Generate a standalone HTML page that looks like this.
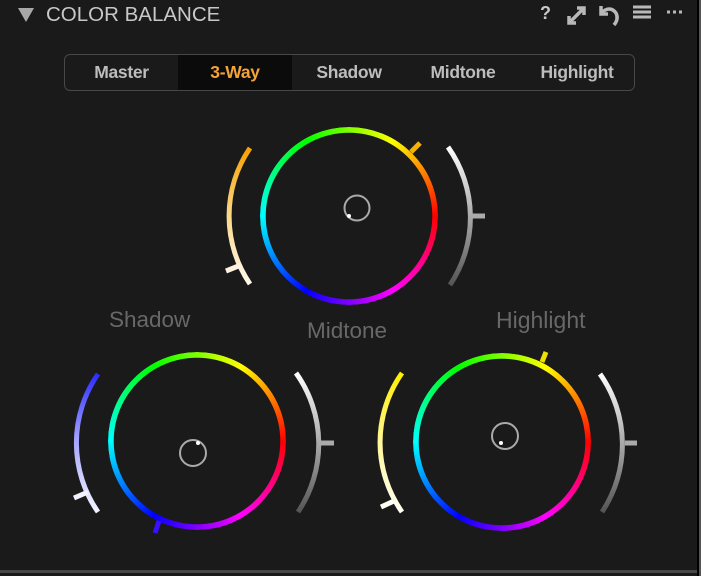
<!DOCTYPE html>
<html><head><meta charset="utf-8"><style>
body{margin:0;width:701px;height:576px;background:#1a1a1a;position:relative;overflow:hidden;font-family:"Liberation Sans",sans-serif}
.abs{position:absolute}
.ring{position:absolute;border-radius:50%;background:conic-gradient(from 90deg,#f00,#f0f 60deg,#00f 120deg,#0ff 180deg,#0f0 240deg,#ff0 300deg,#f00 360deg);-webkit-mask:radial-gradient(circle,transparent 83px,#000 83.5px,#000 89px,transparent 89.5px);mask:radial-gradient(circle,transparent 83px,#000 83.5px,#000 89px,transparent 89.5px)}
.tabs{left:64px;top:54px;width:569px;height:35px;border:1px solid #474747;border-radius:6px}
.tab{position:absolute;top:0;height:35px;line-height:35px;text-align:center;font-weight:bold;font-size:17.5px;color:#bdbdbd;letter-spacing:-0.3px}
.lbl{position:absolute;font-size:22.5px;color:#686868}
</style></head><body>
<div class="abs" style="left:18px;top:8px;width:0;height:0;border-left:8px solid transparent;border-right:8px solid transparent;border-top:14px solid #a8a8a8"></div>
<div class="abs" style="left:46px;top:3px;font-size:20.5px;color:#c8c8c8">COLOR BALANCE</div>
<div class="abs" style="left:540px;top:3px;font-size:18px;font-weight:bold;color:#c8c8c8">?</div>
<svg class="abs" style="left:0;top:0" width="701" height="576">
 <path d="M570 22 L583 9 M577 8 L584 8 L584 15 M569 16 L569 23 L576 23" stroke="#b8b8b8" stroke-width="3.5" fill="none"/>
 <path d="M601 6 L601 14 L608 14 M601 13 Q610 5 616 13 Q619 19 614 25" stroke="#b8b8b8" stroke-width="3.5" fill="none"/>
 <path d="M633 7 H651 M633 12 H651 M633 17 H651" stroke="#b8b8b8" stroke-width="3"/>
 <path d="M667 12 H670 M673 12 H676 M679 12 H682" stroke="#b8b8b8" stroke-width="3"/>
 <rect x="697" y="0" width="2" height="576" fill="#000"/>
 <rect x="699" y="0" width="2" height="576" fill="#555"/>
 <rect x="0" y="570" width="697" height="3" fill="#484848"/>
</svg>
<div class="abs tabs">
 <div class="tab" style="left:0;width:113px">Master</div>
 <div class="tab" style="left:113px;width:114px;background:#0b0b0b;color:#f2a33a">3-Way</div>
 <div class="tab" style="left:227px;width:114px">Shadow</div>
 <div class="tab" style="left:341px;width:114px">Midtone</div>
 <div class="tab" style="left:455px;width:114px">Highlight</div>
</div>
<div class="lbl" style="left:109px;top:307px">Shadow</div>
<div class="lbl" style="left:307px;top:318px">Midtone</div>
<div class="lbl" style="left:496px;top:307px;font-size:23px">Highlight</div>
<div class="ring" style="left:260px;top:127px;width:178px;height:178px"></div>
<div class="ring" style="left:108px;top:352px;width:178px;height:178px"></div>
<div class="ring" style="left:413px;top:353px;width:178px;height:178px"></div>
<svg class="abs" style="left:0;top:0" width="701" height="576">
 <defs>
  <linearGradient id="gA" gradientUnits="userSpaceOnUse" x1="0" y1="147" x2="0" y2="285"><stop offset="0" stop-color="#f5a000"/><stop offset="0.5" stop-color="#fbd98a"/><stop offset="1" stop-color="#fff8ec"/></linearGradient>
  <linearGradient id="gB" gradientUnits="userSpaceOnUse" x1="0" y1="147" x2="0" y2="285"><stop offset="0" stop-color="#fff"/><stop offset="1" stop-color="#555"/></linearGradient>
  <linearGradient id="gC" gradientUnits="userSpaceOnUse" x1="0" y1="373" x2="0" y2="512"><stop offset="0" stop-color="#2a2aff"/><stop offset="0.5" stop-color="#a8a8ff"/><stop offset="1" stop-color="#f4f4ff"/></linearGradient>
  <linearGradient id="gD" gradientUnits="userSpaceOnUse" x1="0" y1="373" x2="0" y2="512"><stop offset="0" stop-color="#fff"/><stop offset="1" stop-color="#555"/></linearGradient>
  <linearGradient id="gE" gradientUnits="userSpaceOnUse" x1="0" y1="373" x2="0" y2="512"><stop offset="0" stop-color="#ffee00"/><stop offset="0.5" stop-color="#fff79a"/><stop offset="1" stop-color="#fffff4"/></linearGradient>
 </defs>
 <path d="M250 148 A121 121 0 0 0 250 284" stroke="url(#gA)" stroke-width="5" fill="none"/>
 <path d="M448 147 A122 122 0 0 1 450 285" stroke="url(#gB)" stroke-width="5" fill="none"/>
 <path d="M226 271 L241 265" stroke="#fff3e0" stroke-width="5"/>
 <path d="M471 216 H485" stroke="#aaa" stroke-width="5"/>
 <path d="M411 152 L420 143" stroke="#f5b000" stroke-width="5"/>
 <circle cx="357" cy="208" r="12.5" stroke="#aaa" stroke-width="2" fill="none"/>
 <circle cx="349" cy="216" r="2" fill="#fff"/>
 <path d="M98 374 A121 121 0 0 0 98 512" stroke="url(#gC)" stroke-width="5" fill="none"/>
 <path d="M296 373 A122 122 0 0 1 298 512" stroke="url(#gD)" stroke-width="5" fill="none"/>
 <path d="M74 498 L88 492" stroke="#f0f0ff" stroke-width="5"/>
 <path d="M319 443 H334" stroke="#aaa" stroke-width="5"/>
 <path d="M159 521 L155 533" stroke="#3a10ff" stroke-width="5"/>
 <circle cx="193" cy="453" r="13" stroke="#aaa" stroke-width="2" fill="none"/>
 <circle cx="198" cy="443" r="2" fill="#fff"/>
 <path d="M402 373 A121 121 0 0 0 402 512" stroke="url(#gE)" stroke-width="5" fill="none"/>
 <path d="M600 374 A122 122 0 0 1 602 512" stroke="url(#gD)" stroke-width="5" fill="none"/>
 <path d="M381 507 L394 501" stroke="#fffff4" stroke-width="5"/>
 <path d="M625 443 H637" stroke="#aaa" stroke-width="5"/>
 <path d="M542 362 L546 352" stroke="#f0e000" stroke-width="5"/>
 <circle cx="505" cy="436" r="13" stroke="#aaa" stroke-width="2" fill="none"/>
 <circle cx="501" cy="443" r="2" fill="#fff"/>
</svg>
</body></html>
